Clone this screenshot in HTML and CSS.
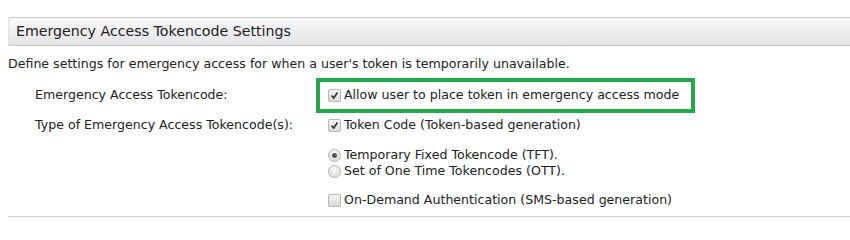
FILE: index.html
```html
<!DOCTYPE html>
<html>
<head>
<meta charset="utf-8">
<link rel="stylesheet" href="styles.css">
</head>
<body>
<div class="panel">
  <div class="header">Emergency Access Tokencode Settings</div>
  <p class="intro">Define settings for emergency access for when a user's token is temporarily unavailable.</p>
  <div class="form">
    <div class="label row1">Emergency Access Tokencode:</div>
    <div class="control row1">
      <div class="highlight">
        <span class="opt"><span class="cb checked"><svg viewBox="0 0 13 13"><path d="M3 6.5 L5.5 9.5 L10 3" fill="none" stroke="#3a3a3a" stroke-width="2"/></svg></span>Allow user to place token in emergency access mode</span>
      </div>
    </div>
    <div class="label row2">Type of Emergency Access Tokencode(s):</div>
    <div class="control row2">
      <span class="opt"><span class="cb checked"><svg viewBox="0 0 13 13"><path d="M3 6.5 L5.5 9.5 L10 3" fill="none" stroke="#3a3a3a" stroke-width="2"/></svg></span>Token Code (Token-based generation)</span>
      <div class="radios">
        <span class="opt"><span class="rb selected"></span>Temporary Fixed Tokencode (TFT).</span>
        <span class="opt"><span class="rb"></span>Set of One Time Tokencodes (OTT).</span>
      </div>
      <span class="opt sms"><span class="cb"></span>On-Demand Authentication (SMS-based generation)</span>
    </div>
  </div>
  <div class="rule"></div>
</div>
</body>
</html>
```
FILE: styles.css
```css
html, body {
  margin: 0;
  padding: 0;
  background: #fff;
}
body {
  font-family: "DejaVu Sans", Verdana, sans-serif;
  font-size: 12.6px;
  color: #222;
}
.panel {
  padding: 17px 0 0 8px;
}
.header {
  height: 27px;
  line-height: 27px;
  border-top: 1px solid #c9c8cc;
  border-bottom: 1px solid #c9c8cc;
  border-left: 1px solid #e2e1e4;
  background: linear-gradient(#f7f6f8, #e5e4e7);
  padding-left: 7px;
  font-size: 14.2px;
  color: #222;
}
.intro {
  margin: 0;
  padding-top: 10px;
  padding-left: 0;
  line-height: 16px;
}
.form {
  display: grid;
  grid-template-columns: 281px auto;
  padding-left: 27px;
  margin-top: 6px;
}
.label {
  line-height: 16px;
}
.label.row1 {
  padding-top: 9px;
}
.label.row2 {
  padding-top: 4px;
}
.control {
  display: flex;
  flex-direction: column;
  align-items: flex-start;
}
.highlight {
  border: 4px solid #25a64a;
  padding: 5px 12px 6px 8px;
  display: flex;
}
.control.row2 {
  padding-top: 4px;
  padding-left: 12px;
}
.opt {
  display: flex;
  align-items: center;
  line-height: 16px;
  height: 16px;
}
.cb {
  width: 11px;
  height: 11px;
  border: 1px solid #b8b8b8;
  border-radius: 2px;
  background: linear-gradient(#f4f4f4, #dcdcdc);
  margin-right: 3px;
  display: inline-flex;
}
.cb svg {
  width: 11px;
  height: 11px;
}
.radios {
  display: flex;
  flex-direction: column;
  margin-top: 14px;
}
.rb {
  width: 11px;
  height: 11px;
  border: 1px solid #b5b5b5;
  border-radius: 50%;
  background: radial-gradient(circle at 50% 35%, #fafafa, #d6d6d6);
  margin-right: 3px;
  position: relative;
}
.rb.selected::after {
  content: "";
  position: absolute;
  left: 3px;
  top: 3px;
  width: 5px;
  height: 5px;
  border-radius: 50%;
  background: #555;
}
.sms {
  margin-top: 13px;
}
.rule {
  margin-top: 8px;
  height: 1px;
  background: #cfcfcf;
}
```
